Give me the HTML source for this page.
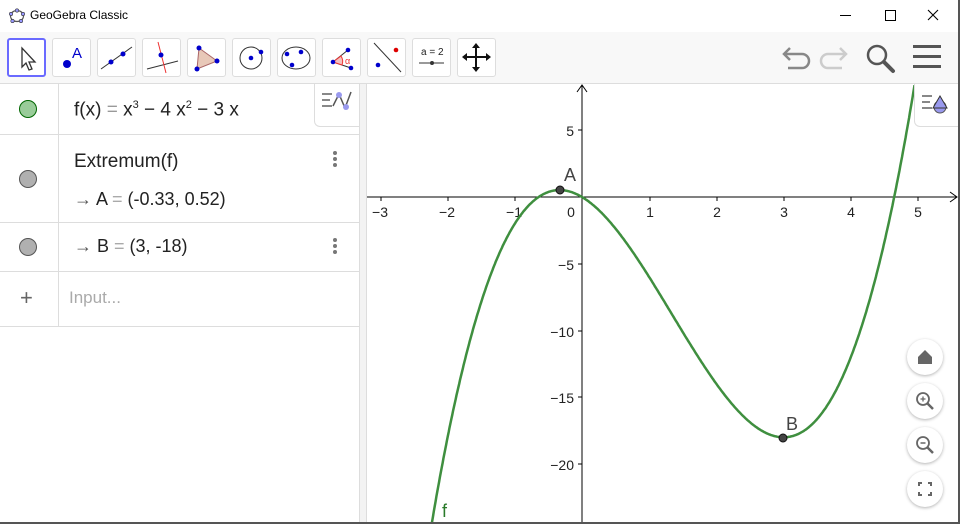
<!DOCTYPE html>
<html><head><style>
html,body{margin:0;width:960px;height:524px;overflow:hidden}
body{font-family:"Liberation Sans",sans-serif;background:#fff;position:relative}
.a{position:absolute}
.btn{position:absolute;top:38px;width:37px;height:37px;border:1px solid #ddd;border-radius:3px;background:#fff}
.row{position:absolute;left:0;width:359px;border-bottom:1px solid #ddd}
.dot{position:absolute;left:19px;width:18px;height:18px;border-radius:50%;border:1px solid #555;background:#b0b0b0;box-sizing:border-box}
.t{position:absolute;left:74px;font-size:19px;color:#222}
.km{position:absolute;left:333px;width:4px}
.km i{display:block;width:4px;height:4px;border-radius:50%;background:#777;margin-bottom:2px}
.zb{position:absolute;left:907px;width:36px;height:36px;border-radius:50%;background:#fff;box-shadow:0 1px 3px rgba(0,0,0,.3)}
</style></head><body>
<div class="a" style="left:0;top:0;width:960px;height:32px;background:#fff"></div>
<svg class="a" style="left:8px;top:7px" width="18" height="18" viewBox="0 0 18 18"><ellipse cx="9" cy="9" rx="6.5" ry="5.5" fill="none" stroke="#555" stroke-width="1.2"/><g fill="#99f" stroke="#333" stroke-width=".6"><circle cx="9" cy="3.5" r="1.7"/><circle cx="15" cy="7" r="1.7"/><circle cx="13" cy="14" r="1.7"/><circle cx="4.5" cy="14" r="1.7"/><circle cx="3" cy="7" r="1.7"/></g></svg>
<div class="a" style="left:30px;top:8px;font-size:12px;color:#000">GeoGebra Classic</div>
<div class="a" style="left:840px;top:15px;width:11px;height:1px;background:#000"></div>
<div class="a" style="left:885px;top:10px;width:9px;height:9px;border:1px solid #000"></div>
<svg class="a" style="left:927px;top:9px" width="12" height="12"><path d="M1 1L11 11M11 1L1 11" stroke="#000" stroke-width="1.1"/></svg>
<div class="a" style="left:0;top:32px;width:960px;height:51px;background:#f8f8f8;border-bottom:1px solid #ddd"></div>
<div class="btn" style="left:7px;border:2px solid #6a6aff;width:35px;height:35px"><svg width="35" height="35"><path d="M13 8 L13 27 L17 23 L20 30 L23 29 L20 22 L26 22 Z" fill="#fff" stroke="#333" stroke-width="1.3"/></svg></div>
<div class="btn" style="left:52px"><svg width="37" height="37"><circle cx="14" cy="25" r="4" fill="#00c"/><text x="19" y="19" font-size="15" fill="#00c" font-family="Liberation Sans">A</text></svg></div>
<div class="btn" style="left:97px"><svg width="37" height="37"><line x1="3" y1="30" x2="34" y2="8" stroke="#333"/><circle cx="13" cy="23" r="2.5" fill="#00c"/><circle cx="25" cy="15" r="2.5" fill="#00c"/></svg></div>
<div class="btn" style="left:142px"><svg width="37" height="37"><line x1="4" y1="30" x2="35" y2="22" stroke="#333"/><line x1="15" y1="3" x2="23" y2="34" stroke="#e33"/><circle cx="18" cy="16" r="2.5" fill="#00c"/></svg></div>
<div class="btn" style="left:187px"><svg width="37" height="37"><path d="M11 9 L29 22 L9 30Z" fill="#e8c8b8" stroke="#a66"/><circle cx="11" cy="9" r="2.5" fill="#00c"/><circle cx="29" cy="22" r="2.5" fill="#00c"/><circle cx="9" cy="30" r="2.5" fill="#00c"/></svg></div>
<div class="btn" style="left:232px"><svg width="37" height="37"><circle cx="18" cy="19" r="11" fill="none" stroke="#333"/><circle cx="18" cy="19" r="2.3" fill="#00c"/><circle cx="28" cy="13" r="2.3" fill="#00c"/></svg></div>
<div class="btn" style="left:277px"><svg width="37" height="37"><ellipse cx="18" cy="19" rx="14" ry="11" fill="none" stroke="#333"/><circle cx="9" cy="15" r="2.3" fill="#00c"/><circle cx="23" cy="13" r="2.3" fill="#00c"/><circle cx="14" cy="26" r="2.3" fill="#00c"/></svg></div>
<div class="btn" style="left:322px"><svg width="37" height="37"><path d="M10 23 L25 11 M10 23 L28 29" stroke="#333"/><path d="M10 23 L18 17 A10 10 0 0 1 19 26Z" fill="#f5c0c0" stroke="#e33"/><text x="22" y="25" font-size="9" fill="#e33">α</text><circle cx="10" cy="23" r="2.3" fill="#00c"/><circle cx="25" cy="11" r="2.3" fill="#00c"/><circle cx="28" cy="29" r="2.3" fill="#00c"/></svg></div>
<div class="btn" style="left:367px"><svg width="37" height="37"><line x1="6" y1="4" x2="33" y2="33" stroke="#333"/><circle cx="28" cy="11" r="2.3" fill="#d00"/><circle cx="10" cy="26" r="2.3" fill="#00c"/></svg></div>
<div class="btn" style="left:412px"><svg width="37" height="37"><text x="8" y="16" font-size="10" fill="#222" font-family="Liberation Sans">a = 2</text><line x1="6" y1="24" x2="31" y2="24" stroke="#333"/><circle cx="19" cy="24" r="2" fill="#333"/></svg></div>
<div class="btn" style="left:457px"><svg width="37" height="37"><path d="M18 6V31M6 18H31" stroke="#111" stroke-width="2"/><path d="M18 4l-4 5h8zM18 33l-4-5h8zM4 18l5-4v8zM33 18l-5-4v8z" fill="#111"/></svg></div>
<svg class="a" style="left:780px;top:44px" width="70" height="30"><path d="M10 4L4 10L10 16M4 10H22A7 7 0 0 1 22 24H8" fill="none" stroke="#888" stroke-width="2.5"/><path d="M60 4L66 10L60 16M66 10H48A7 7 0 0 0 48 24H62" fill="none" stroke="#ccc" stroke-width="2.5"/></svg>
<svg class="a" style="left:862px;top:40px" width="36" height="36"><circle cx="15" cy="15" r="9" fill="none" stroke="#555" stroke-width="2.5"/><path d="M22 22L31 31" stroke="#555" stroke-width="4" stroke-linecap="round"/></svg>
<div class="a" style="left:913px;top:45px;width:28px;height:3px;background:#555;box-shadow:0 10px 0 #555,0 20px 0 #555"></div>

<div class="a" style="left:58px;top:84px;width:1px;height:242px;background:#ddd"></div>
<div class="row" style="top:84px;height:50px"></div>
<div class="dot" style="top:100px;background:#9c9;border-color:#060"></div>
<div class="t" style="top:99px">f(x) <span style="color:#999">=</span> x<sup style="font-size:11px">3</sup> − 4 x<sup style="font-size:11px">2</sup> − 3 x</div>
<div class="a" style="left:314px;top:84px;width:45px;height:42px;background:#fff;border:1px solid #ddd;border-top:none;border-right:none;border-radius:0 0 0 6px"><svg width="45" height="40"><path d="M7 10H17M7 16H15M7 22H17" stroke="#888" stroke-width="2"/><path d="M18 22L24 10L30 24L36 8" fill="none" stroke="#555" stroke-width="1.5"/><circle cx="24" cy="11" r="3" fill="#99e"/><circle cx="31" cy="23" r="3" fill="#99e"/></svg></div>
<div class="row" style="top:135px;height:87px"></div>
<div class="dot" style="top:170px"></div>
<div class="t" style="top:151px">Extremum(f)</div>
<div class="t" style="top:189px;font-size:18px"><span style="color:#555">→</span> A <span style="color:#aaa">=</span> (-0.33, 0.52)</div>
<div class="km" style="top:151px"><i></i><i></i><i></i></div>
<div class="row" style="top:223px;height:48px"></div>
<div class="dot" style="top:238px"></div>
<div class="t" style="top:236px;font-size:18px"><span style="color:#555">→</span> B <span style="color:#aaa">=</span> (3, -18)</div>
<div class="km" style="top:238px"><i></i><i></i><i></i></div>
<div class="row" style="top:272px;height:54px"></div>
<div class="a" style="left:20px;top:285px;font-size:22px;color:#666">+</div>
<div class="t" style="top:288px;left:69px;font-size:17px;color:#aaa">Input...</div>
<div class="a" style="left:359px;top:84px;width:6px;height:438px;background:#f3f3f3;border-left:1px solid #ddd;border-right:1px solid #ddd"></div>

<svg class="a" style="left:0;top:0" width="960" height="524">
<line x1="367" y1="197" x2="957" y2="197" stroke="#000"/><path d="M950 192L957 197L950 202" fill="none" stroke="#000"/>
<line x1="582" y1="85" x2="582" y2="524" stroke="#000"/><path d="M577 92L582 85L587 92" fill="none" stroke="#000"/>
<g stroke="#000"><line x1="381" y1="197" x2="381" y2="201"/><line x1="448" y1="197" x2="448" y2="201"/><line x1="515" y1="197" x2="515" y2="201"/><line x1="650" y1="197" x2="650" y2="201"/><line x1="717" y1="197" x2="717" y2="201"/><line x1="784" y1="197" x2="784" y2="201"/><line x1="851" y1="197" x2="851" y2="201"/><line x1="918" y1="197" x2="918" y2="201"/>
<line x1="578" y1="130" x2="582" y2="130"/><line x1="578" y1="264" x2="582" y2="264"/><line x1="578" y1="331" x2="582" y2="331"/><line x1="578" y1="397" x2="582" y2="397"/><line x1="578" y1="464" x2="582" y2="464"/></g>
<g font-size="14" fill="#222" font-family="Liberation Sans" text-anchor="middle"><text x="380" y="217">−3</text><text x="447" y="217">−2</text><text x="514" y="217">−1</text><text x="571" y="217">0</text><text x="650" y="217">1</text><text x="717" y="217">2</text><text x="784" y="217">3</text><text x="851" y="217">4</text><text x="918" y="217">5</text></g>
<g font-size="14" fill="#222" font-family="Liberation Sans" text-anchor="end"><text x="574" y="136">5</text><text x="574" y="270">−5</text><text x="574" y="337">−10</text><text x="574" y="403">−15</text><text x="574" y="470">−20</text></g>
<clipPath id="c"><rect x="367" y="85" width="593" height="437"/></clipPath>
<path id="cv" clip-path="url(#c)" fill="none" stroke="#3f8f3f" stroke-width="2.5" d=""/>
<circle cx="560" cy="190" r="4" fill="#444" stroke="#111"/><text x="564" y="181" font-size="18" fill="#444" font-family="Liberation Sans">A</text>
<circle cx="783" cy="438" r="4" fill="#444" stroke="#111"/><text x="786" y="430" font-size="18" fill="#444" font-family="Liberation Sans">B</text>
<text x="442" y="517" font-size="18" fill="#2a7a2a" font-family="Liberation Sans">f</text>
</svg>
<div class="a" style="left:914px;top:84px;width:46px;height:42px;background:#fff;border-left:1px solid #ddd;border-bottom:1px solid #ddd;border-radius:0 0 0 6px"><svg width="46" height="40"><path d="M7 12H17M7 18H15M7 24H17" stroke="#888" stroke-width="2"/><circle cx="25" cy="23" r="6" fill="#99e" stroke="#555"/><path d="M25 12L32 24H18Z" fill="#99e" stroke="#333"/></svg></div>
<div class="zb" style="top:339px"><svg width="36" height="36"><path d="M11 18L18 11L25 18V25H11Z" fill="#666"/></svg></div>
<div class="zb" style="top:383px"><svg width="36" height="36"><circle cx="16" cy="16" r="6" fill="none" stroke="#666" stroke-width="1.8"/><path d="M20 20L26 26" stroke="#666" stroke-width="2.5"/><path d="M13.5 16H18.5M16 13.5V18.5" stroke="#666" stroke-width="1.3"/></svg></div>
<div class="zb" style="top:427px"><svg width="36" height="36"><circle cx="16" cy="16" r="6" fill="none" stroke="#666" stroke-width="1.8"/><path d="M20 20L26 26" stroke="#666" stroke-width="2.5"/><path d="M13.5 16H18.5" stroke="#666" stroke-width="1.5"/></svg></div>
<div class="zb" style="top:471px"><svg width="36" height="36"><path d="M12 15V12H15M21 12H24V15M24 21V24H21M15 24H12V21" fill="none" stroke="#666" stroke-width="2"/></svg></div>
<div class="a" style="left:0;top:522px;width:960px;height:2px;background:#555"></div>
<div class="a" style="left:958px;top:0;width:2px;height:524px;background:#555"></div>
<script>
var d="";for(var i=0;i<=600;i++){var x=-2.4+i*7.8/600;var y=x*x*x-4*x*x-3*x;var px=582+x*67.2,py=197-y*13.35;d+=(i?"L":"M")+px.toFixed(1)+" "+py.toFixed(1);}
document.getElementById("cv").setAttribute("d",d);
</script>
</body></html>
